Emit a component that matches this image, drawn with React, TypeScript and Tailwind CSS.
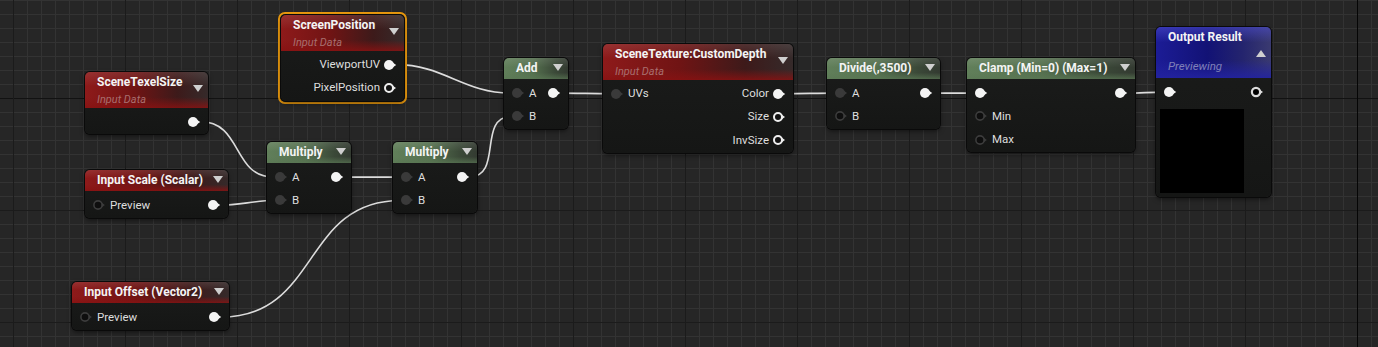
import React from "react";

type PinKind = "out" | "hollow" | "inDark" | "hollowDark" | "inWhite" | "eye";

function Pin({ kind }: { kind: PinKind }) {
  let body: React.ReactNode = null;
  if (kind === "out" || kind === "inWhite") {
    body = (
      <>
        <circle cx="6" cy="6" r="5" fill="#f4f4f4" />
        <path d="M9.6 3.4 L13.2 6 L9.6 8.6 Z" fill="#f4f4f4" />
      </>
    );
  } else if (kind === "hollow") {
    body = (
      <>
        <circle cx="6" cy="6" r="4" fill="#121212" stroke="#eeeeee" strokeWidth="2" />
        <path d="M9.8 3.8 L13 6 L9.8 8.2 Z" fill="#eeeeee" />
      </>
    );
  } else if (kind === "eye") {
    body = (
      <>
        <circle cx="6" cy="6" r="4.1" fill="#000" stroke="#dddddd" strokeWidth="2.2" />
        <path d="M9.8 3.8 L13 6 L9.8 8.2 Z" fill="#dddddd" />
      </>
    );
  } else if (kind === "inDark") {
    body = (
      <>
        <circle cx="6" cy="6" r="5" fill="#3a3a3a" />
        <path d="M9.6 3.4 L13 6 L9.6 8.6 Z" fill="#3a3a3a" />
      </>
    );
  } else {
    body = (
      <>
        <circle cx="6" cy="6" r="4.1" fill="#0e0e0e" stroke="#3c3c3c" strokeWidth="1.6" />
        <path d="M9.8 3.8 L12.8 6 L9.8 8.2 Z" fill="#3c3c3c" />
      </>
    );
  }
  return (
    <svg width="16" height="12" viewBox="0 0 16 12" className="block shrink-0">
      {body}
    </svg>
  );
}

type Side = { pin: PinKind; label?: string };
type Row = { left?: Side; right?: Side };

type Variant = "red" | "green" | "blue";

const headerBg: Record<Variant, string> = {
  red: "bg-[linear-gradient(180deg,rgba(255,255,255,0.10)_0%,rgba(255,255,255,0)_40%,rgba(0,0,0,0)_70%,rgba(135,18,18,0.85)_100%),linear-gradient(90deg,#8e1a1a_0%,#701414_40%,#3d1a1a_75%,#352a2a_100%)]",
  green:
    "bg-[linear-gradient(180deg,rgba(255,255,255,0.10)_0%,rgba(255,255,255,0)_45%,rgba(0,0,0,0)_70%,rgba(90,120,84,0.7)_100%),linear-gradient(90deg,#617f5a_0%,#55704f_45%,#3b4938_80%,#333a31_100%)]",
  blue: "bg-[linear-gradient(180deg,rgba(80,80,210,0.55)_0%,rgba(0,0,0,0)_30%,rgba(0,0,0,0)_65%,rgba(35,35,160,0.9)_100%),linear-gradient(90deg,#1c1c96_0%,#121275_45%,#24246e_75%,#3a3a70_100%)]",
};

function Arrow({ up }: { up?: boolean }) {
  return (
    <svg width="10" height="7" viewBox="0 0 10 7" className="block shrink-0">
      {up ? <path d="M5 0 L10 7 L0 7 Z" fill="#cfcfcf" /> : <path d="M0 0 L10 0 L5 7 Z" fill="#cfcfcf" />}
    </svg>
  );
}

function RowView({ row }: { row: Row }) {
  return (
    <div className="flex h-[23.33px] items-center">
      {row.left ? (
        <div className="flex items-center pl-[6.5px]">
          <Pin kind={row.left.pin} />
          {row.left.label ? (
            <span className="ml-[2.5px] text-[11.5px] leading-[13px] text-[#dedede]">{row.left.label}</span>
          ) : null}
        </div>
      ) : null}
      {row.right ? (
        <div className="ml-auto flex items-center pr-[5px]">
          {row.right.label ? (
            <span className="mr-[3px] text-[11.5px] leading-[13px] text-[#dedede]">{row.right.label}</span>
          ) : null}
          <Pin kind={row.right.pin} />
        </div>
      ) : null}
    </div>
  );
}

type NodeProps = {
  x: number;
  y: number;
  w: number;
  variant: Variant;
  title: string;
  subtitle?: string;
  rows: Row[];
  selected?: boolean;
  output?: boolean;
};

function GraphNode({ x, y, w, variant, title, subtitle, rows, selected, output }: NodeProps) {
  const twoLine = !!subtitle;
  const card = (
    <div
      className="flex flex-col overflow-hidden rounded-[5px] bg-[linear-gradient(180deg,#1b1c1b_0%,#151615_100%)] shadow-[0_0_0_1px_#0a0a0a,0_2px_5px_rgba(0,0,0,0.55)]"
      style={{ width: w }}
    >
      {output ? (
        <div className={`flex h-[51px] ${headerBg[variant]}`}>
          <div className="flex flex-1 flex-col pl-[12px] pt-[3px]">
            <span className="text-[12px] font-bold leading-[14px] text-[#f4f4f4]">{title}</span>
            <span className="mt-[16px] text-[11.5px] italic leading-[13px] text-[#8080b8]">{subtitle}</span>
          </div>
          <div className="mr-[5px] mt-[23px]">
            <Arrow up />
          </div>
        </div>
      ) : (
        <div className={`flex ${twoLine ? "h-[36px]" : "h-[21px]"} ${headerBg[variant]}`}>
          <div className="flex flex-1 flex-col pl-[12px] pt-[3px]">
            <span className="whitespace-nowrap text-[12px] font-bold leading-[14px] text-[#f4f4f4]">{title}</span>
            {twoLine ? (
              <span className="mt-[3.5px] text-[11px] italic leading-[13px] text-[#a86e6e]">{subtitle}</span>
            ) : null}
          </div>
          <div className={`mr-[5px] ${twoLine ? "mt-[13px]" : "mt-[6px]"}`}>
            <Arrow />
          </div>
        </div>
      )}
      <div className={`flex flex-col ${output ? "pt-[2.5px] pb-[4px]" : twoLine ? "pt-[2px] pb-[1px]" : "pt-[2.5px] pb-[1px]"}`}>
        {rows.map((r, i) => (
          <RowView key={i} row={r} />
        ))}
        {output ? <div className="ml-[3.5px] mt-[5.5px] h-[84px] w-[84px] bg-black" /> : null}
      </div>
    </div>
  );

  if (selected) {
    return (
      <div
        className="absolute rounded-[7px] border-2 border-[#eb9a0e] p-[1px]"
        style={{ left: x - 3, top: y - 3 }}
      >
        {card}
      </div>
    );
  }
  return (
    <div className="absolute" style={{ left: x, top: y }}>
      {card}
    </div>
  );
}

function Grid() {
  const W = 1378;
  const H = 347;
  const minorV: React.ReactNode[] = [];
  const majorV: React.ReactNode[] = [];
  for (let x = 13; x < W; x += 14) {
    const major = (x - 13) % 112 === 0;
    const axis = x === 1357;
    const el = (
      <rect
        key={"v" + x}
        x={x}
        y={0}
        width={1}
        height={H}
        fill={axis ? "#050505" : major ? "#1b1b1b" : "#333333"}
      />
    );
    (major ? majorV : minorV).push(el);
  }
  const minorH: React.ReactNode[] = [];
  const majorH: React.ReactNode[] = [];
  for (let y = 0; y < H; y += 14) {
    const major = (y - 98) % 112 === 0;
    const axis = y === 98;
    const el = (
      <rect
        key={"h" + y}
        x={0}
        y={y}
        width={W}
        height={1}
        fill={axis ? "#121212" : major ? "#1b1b1b" : "#333333"}
      />
    );
    (major ? majorH : minorH).push(el);
  }
  return (
    <svg width={W} height={H} className="absolute left-0 top-0">
      <rect x="0" y="0" width={W} height={H} fill="#262626" />
      {minorV}
      {minorH}
      {majorH}
      {majorV}
    </svg>
  );
}

// geometry helpers
const SINGLE = (y: number, i: number) => y + 21 + 2.5 + 11.67 + 23.33 * i;
const DOUBLE = (y: number, i: number) => y + 36 + 2 + 11.67 + 23.33 * i;
const IN = (x: number) => x + 12.5;
const OUT = (x: number, w: number) => x + w - 15;

function wire(x1: number, y1: number, x2: number, y2: number) {
  const sx = x1 + 7;
  const ex = x2 - 5;
  const d = (Math.abs(ex - sx) + Math.abs(y2 - y1)) / 3;
  return `M${sx} ${y1} C${sx + d} ${y1} ${ex - d} ${y2} ${ex} ${y2}`;
}

export default function App() {
  const N = {
    texel: { x: 85, y: 72, w: 123 },
    screen: { x: 281, y: 15, w: 123 },
    scale: { x: 85, y: 170, w: 143 },
    mul1: { x: 267, y: 142, w: 84 },
    mul2: { x: 393, y: 142, w: 84 },
    add: { x: 504, y: 58, w: 64 },
    tex: { x: 603, y: 44, w: 190 },
    div: { x: 827, y: 58, w: 113 },
    clamp: { x: 967, y: 58, w: 168 },
    outp: { x: 1156, y: 27, w: 115 },
    offset: { x: 72, y: 282, w: 157 },
  };

  const wires = [
    wire(OUT(N.texel.x, N.texel.w), DOUBLE(N.texel.y, 0), IN(N.mul1.x), SINGLE(N.mul1.y, 0)),
    wire(OUT(N.scale.x, N.scale.w), SINGLE(N.scale.y, 0), IN(N.mul1.x), SINGLE(N.mul1.y, 1)),
    wire(OUT(N.mul1.x, N.mul1.w), SINGLE(N.mul1.y, 0), IN(N.mul2.x), SINGLE(N.mul2.y, 0)),
    wire(OUT(N.offset.x, N.offset.w), SINGLE(N.offset.y, 0), IN(N.mul2.x), SINGLE(N.mul2.y, 1)),
    wire(OUT(N.screen.x, N.screen.w), DOUBLE(N.screen.y, 0), IN(N.add.x), SINGLE(N.add.y, 0)),
    wire(OUT(N.mul2.x, N.mul2.w), SINGLE(N.mul2.y, 0), IN(N.add.x), SINGLE(N.add.y, 1)),
    wire(OUT(N.add.x, N.add.w), SINGLE(N.add.y, 0), IN(N.tex.x), DOUBLE(N.tex.y, 0)),
    wire(OUT(N.tex.x, N.tex.w), DOUBLE(N.tex.y, 0), IN(N.div.x), SINGLE(N.div.y, 0)),
    wire(OUT(N.div.x, N.div.w), SINGLE(N.div.y, 0), IN(N.clamp.x), SINGLE(N.clamp.y, 0)),
    wire(OUT(N.clamp.x, N.clamp.w), SINGLE(N.clamp.y, 0), IN(N.outp.x), N.outp.y + 51 + 2.5 + 11.67),
  ];

  return (
    <div className="relative h-[347px] w-[1378px] overflow-hidden bg-[#262626] font-['Roboto',sans-serif]">
      <Grid />
      <svg width="1378" height="347" className="absolute left-0 top-0">
        {wires.map((d, i) => (
          <path key={i} d={d} fill="none" stroke="#dcdcdc" strokeWidth="1.6" strokeLinecap="round" />
        ))}
      </svg>

      <GraphNode
        {...N.texel}
        variant="red"
        title="SceneTexelSize"
        subtitle="Input Data"
        rows={[{ right: { pin: "out" } }]}
      />
      <GraphNode
        {...N.screen}
        selected
        variant="red"
        title="ScreenPosition"
        subtitle="Input Data"
        rows={[
          { right: { pin: "out", label: "ViewportUV" } },
          { right: { pin: "hollow", label: "PixelPosition" } },
        ]}
      />
      <GraphNode
        {...N.scale}
        variant="red"
        title="Input Scale (Scalar)"
        rows={[{ left: { pin: "hollowDark", label: "Preview" }, right: { pin: "out" } }]}
      />
      <GraphNode
        {...N.mul1}
        variant="green"
        title="Multiply"
        rows={[
          { left: { pin: "inDark", label: "A" }, right: { pin: "out" } },
          { left: { pin: "inDark", label: "B" } },
        ]}
      />
      <GraphNode
        {...N.mul2}
        variant="green"
        title="Multiply"
        rows={[
          { left: { pin: "inDark", label: "A" }, right: { pin: "out" } },
          { left: { pin: "inDark", label: "B" } },
        ]}
      />
      <GraphNode
        {...N.add}
        variant="green"
        title="Add"
        rows={[
          { left: { pin: "inDark", label: "A" }, right: { pin: "out" } },
          { left: { pin: "inDark", label: "B" } },
        ]}
      />
      <GraphNode
        {...N.tex}
        variant="red"
        title="SceneTexture:CustomDepth"
        subtitle="Input Data"
        rows={[
          { left: { pin: "inDark", label: "UVs" }, right: { pin: "out", label: "Color" } },
          { right: { pin: "hollow", label: "Size" } },
          { right: { pin: "hollow", label: "InvSize" } },
        ]}
      />
      <GraphNode
        {...N.div}
        variant="green"
        title="Divide(,3500)"
        rows={[
          { left: { pin: "inDark", label: "A" }, right: { pin: "out" } },
          { left: { pin: "hollowDark", label: "B" } },
        ]}
      />
      <GraphNode
        {...N.clamp}
        variant="green"
        title="Clamp (Min=0) (Max=1)"
        rows={[
          { left: { pin: "inWhite" }, right: { pin: "out" } },
          { left: { pin: "hollowDark", label: "Min" } },
          { left: { pin: "hollowDark", label: "Max" } },
        ]}
      />
      <GraphNode
        {...N.outp}
        output
        variant="blue"
        title="Output Result"
        subtitle="Previewing"
        rows={[{ left: { pin: "inWhite" }, right: { pin: "eye" } }]}
      />
      <GraphNode
        {...N.offset}
        variant="red"
        title="Input Offset (Vector2)"
        rows={[{ left: { pin: "hollowDark", label: "Preview" }, right: { pin: "out" } }]}
      />
    </div>
  );
}
